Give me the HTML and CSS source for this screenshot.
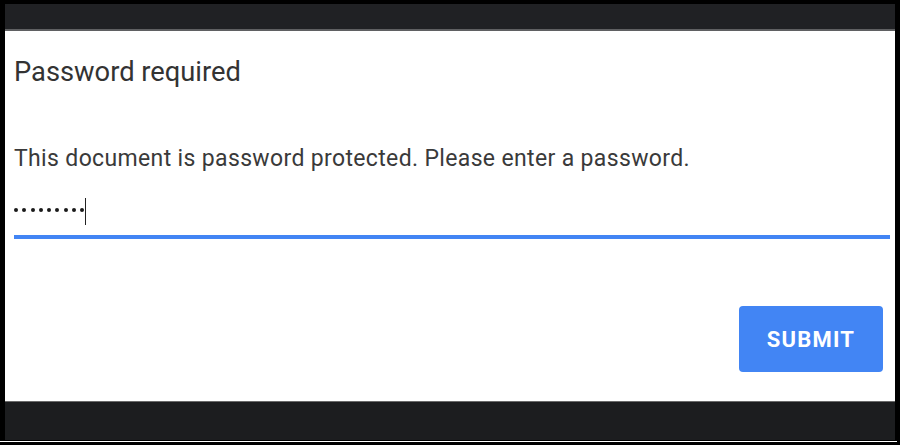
FILE: index.html
```html
<!DOCTYPE html>
<html>
<head>
<meta charset="utf-8">
<link rel="stylesheet" href="styles.css">
</head>
<body>
<div class="frame">
  <div class="topbar"></div>
  <div class="panel">
    <h1 class="title">Password required</h1>
    <p class="message">This document is password protected. Please enter a password.</p>
    <div class="field">
      <div class="dots">
        <span class="dot"></span><span class="dot"></span><span class="dot"></span>
        <span class="dot"></span><span class="dot"></span><span class="dot"></span>
        <span class="dot"></span><span class="dot"></span><span class="dot"></span>
      </div>
      <span class="caret"></span>
    </div>
    <div class="actions">
      <button class="submit">SUBMIT</button>
    </div>
  </div>
  <div class="botbar"></div>
</div>
<div class="edge"></div>
</body>
</html>
```

FILE: styles.css
```css
html, body {
  margin: 0;
  padding: 0;
  background: #000;
  height: 445px;
  overflow: hidden;
  font-family: Roboto, "Liberation Sans", sans-serif;
}
.frame {
  padding: 4px 5px 0 5px;
}
.topbar {
  height: 25px;
  background: #202124;
  border-bottom: 2px solid #5f6062;
}
.panel {
  background: #fff;
  height: 370px;
  box-sizing: border-box;
  padding: 25px 0 0 9px;
  display: flex;
  flex-direction: column;
}
.title {
  margin: 0;
  font-size: 27.3px;
  line-height: 32px;
  font-weight: 400;
  color: #333;
}
.message {
  margin: 58px 0 0 0;
  font-size: 23px;
  line-height: 26px;
  letter-spacing: 0.35px;
  color: #3a3a3a;
}
.field {
  margin: 26px 5px 0 0;
  height: 41px;
  box-sizing: border-box;
  border-bottom: 4px solid #4285f4;
  display: flex;
  align-items: flex-start;
}
.dots {
  display: flex;
  gap: 4.25px;
  margin: 10px 0 0 0;
}
.dot {
  width: 4px;
  height: 4px;
  border-radius: 50%;
  background: #1a1a1a;
}
.caret {
  width: 1.5px;
  height: 27px;
  background: #222;
  margin-left: 0.5px;
}
.actions {
  display: flex;
  justify-content: flex-end;
  margin-top: 67px;
  padding-right: 12px;
}
.submit {
  width: 144px;
  height: 66px;
  border: none;
  border-radius: 4px;
  background: #4285f4;
  color: #fff;
  font-family: Roboto, "Liberation Sans", sans-serif;
  font-size: 22px;
  font-weight: 700;
  letter-spacing: 1.2px;
  padding: 0;
}
.botbar {
  height: 38px;
  background: #1c1d1f;
  border-top: 1px solid #6a6a6a;
}
.edge {
  margin-top: 1px;
  width: 897px;
  height: 1px;
  background: #fff;
}
```
